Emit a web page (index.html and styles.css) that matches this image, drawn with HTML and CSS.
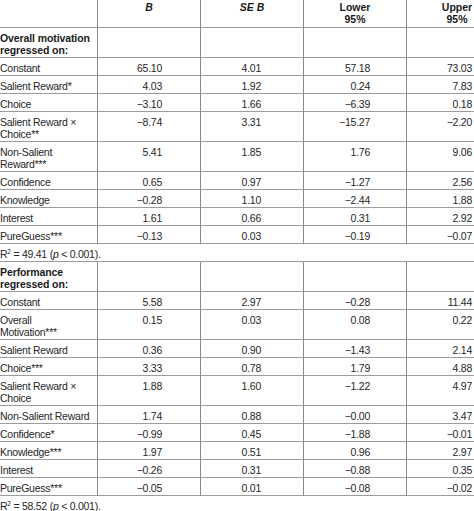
FILE: index.html
```html
<!DOCTYPE html>
<html lang="en">
<head>
<meta charset="utf-8">
<title>Regression table</title>
<link rel="stylesheet" href="styles.css">
</head>
<body>
<div class="tbl">
  <div class="row head">
    <div class="c"></div>
    <div class="c"><b><i>B</i></b></div>
    <div class="c"><b><i>SE B</i></b></div>
    <div class="c"><b>Lower<br>95%</b></div>
    <div class="c"><b>Upper<br>95%</b></div>
  </div>

  <div class="row sec">
    <div class="c"><b>Overall motivation<br>regressed on:</b></div>
    <div class="c"></div><div class="c"></div><div class="c"></div><div class="c"></div>
  </div>
  <div class="row"><div class="c">Constant</div><div class="c">65.10</div><div class="c">4.01</div><div class="c">57.18</div><div class="c">73.03</div></div>
  <div class="row"><div class="c">Salient Reward*</div><div class="c">4.03</div><div class="c">1.92</div><div class="c">0.24</div><div class="c">7.83</div></div>
  <div class="row"><div class="c">Choice</div><div class="c">−3.10</div><div class="c">1.66</div><div class="c">−6.39</div><div class="c">0.18</div></div>
  <div class="row"><div class="c">Salient Reward ×<br>Choice**</div><div class="c">−8.74</div><div class="c">3.31</div><div class="c">−15.27</div><div class="c">−2.20</div></div>
  <div class="row"><div class="c">Non-Salient<br>Reward***</div><div class="c">5.41</div><div class="c">1.85</div><div class="c">1.76</div><div class="c">9.06</div></div>
  <div class="row"><div class="c">Confidence</div><div class="c">0.65</div><div class="c">0.97</div><div class="c">−1.27</div><div class="c">2.56</div></div>
  <div class="row"><div class="c">Knowledge</div><div class="c">−0.28</div><div class="c">1.10</div><div class="c">−2.44</div><div class="c">1.88</div></div>
  <div class="row"><div class="c">Interest</div><div class="c">1.61</div><div class="c">0.66</div><div class="c">0.31</div><div class="c">2.92</div></div>
  <div class="row"><div class="c">PureGuess***</div><div class="c">−0.13</div><div class="c">0.03</div><div class="c">−0.19</div><div class="c">−0.07</div></div>
  <div class="row"><div class="c note">R<sup>2</sup> = 49.41 (<i>p</i> &lt; 0.001).</div></div>

  <div class="row sec">
    <div class="c"><b>Performance<br>regressed on:</b></div>
    <div class="c"></div><div class="c"></div><div class="c"></div><div class="c"></div>
  </div>
  <div class="row"><div class="c">Constant</div><div class="c">5.58</div><div class="c">2.97</div><div class="c">−0.28</div><div class="c">11.44</div></div>
  <div class="row"><div class="c">Overall<br>Motivation***</div><div class="c">0.15</div><div class="c">0.03</div><div class="c">0.08</div><div class="c">0.22</div></div>
  <div class="row"><div class="c">Salient Reward</div><div class="c">0.36</div><div class="c">0.90</div><div class="c">−1.43</div><div class="c">2.14</div></div>
  <div class="row"><div class="c">Choice***</div><div class="c">3.33</div><div class="c">0.78</div><div class="c">1.79</div><div class="c">4.88</div></div>
  <div class="row"><div class="c">Salient Reward ×<br>Choice</div><div class="c">1.88</div><div class="c">1.60</div><div class="c">−1.22</div><div class="c">4.97</div></div>
  <div class="row"><div class="c">Non-Salient Reward</div><div class="c">1.74</div><div class="c">0.88</div><div class="c">−0.00</div><div class="c">3.47</div></div>
  <div class="row"><div class="c">Confidence*</div><div class="c">−0.99</div><div class="c">0.45</div><div class="c">−1.88</div><div class="c">−0.01</div></div>
  <div class="row"><div class="c">Knowledge***</div><div class="c">1.97</div><div class="c">0.51</div><div class="c">0.96</div><div class="c">2.97</div></div>
  <div class="row"><div class="c">Interest</div><div class="c">−0.26</div><div class="c">0.31</div><div class="c">−0.88</div><div class="c">0.35</div></div>
  <div class="row"><div class="c">PureGuess***</div><div class="c">−0.05</div><div class="c">0.01</div><div class="c">−0.08</div><div class="c">−0.02</div></div>
  <div class="row"><div class="c note">R<sup>2</sup> = 58.52 (<i>p</i> &lt; 0.001).</div></div>
</div>
</body>
</html>
```

FILE: styles.css
```css
html, body {
  margin: 0;
  padding: 0;
  overflow: hidden;
  background: #ffffff;
}

body {
  font-family: "Liberation Sans", Arial, sans-serif;
  font-size: 10.5px;
  letter-spacing: -0.25px;
  color: #262626;
}

.tbl {
  display: grid;
  grid-template-columns: 98px 103px 103px 103px 100px;
  margin-top: -2px;
  width: 507px;
}

.row {
  display: contents;
}

.c {
  padding: 3.5px 0 1.5px;
  line-height: 12px;
  border-bottom: 1px solid #9c9c9c;
  border-right: 1px solid #8a8a8a;
  white-space: nowrap;
  text-align: right;
}

.row > .c:first-child {
  text-align: left;
  padding-left: 0;
}

.row > .c:nth-child(2) { padding-right: 38px; }
.row > .c:nth-child(3) { padding-right: 42px; }
.row > .c:nth-child(4) { padding-right: 36px; }
.row > .c:nth-child(5) { padding-right: 35px; border-right: none; }

.head > .c {
  text-align: center;
  letter-spacing: 0;
  color: #1a1a1a;
  padding-top: 2.5px;
  padding-bottom: 2.5px;
}
.head > .c:nth-child(2),
.head > .c:nth-child(3),
.head > .c:nth-child(4),
.head > .c:nth-child(5) {
  padding-right: 0;
}

.sec > .c {
  color: #1a1a1a;
  letter-spacing: -0.1px;
}

.c.note {
  grid-column: 1 / -1;
  border-right: none;
  text-align: left;
}

sup {
  font-size: 6.5px;
  line-height: 0;
  vertical-align: 4px;
}
```
